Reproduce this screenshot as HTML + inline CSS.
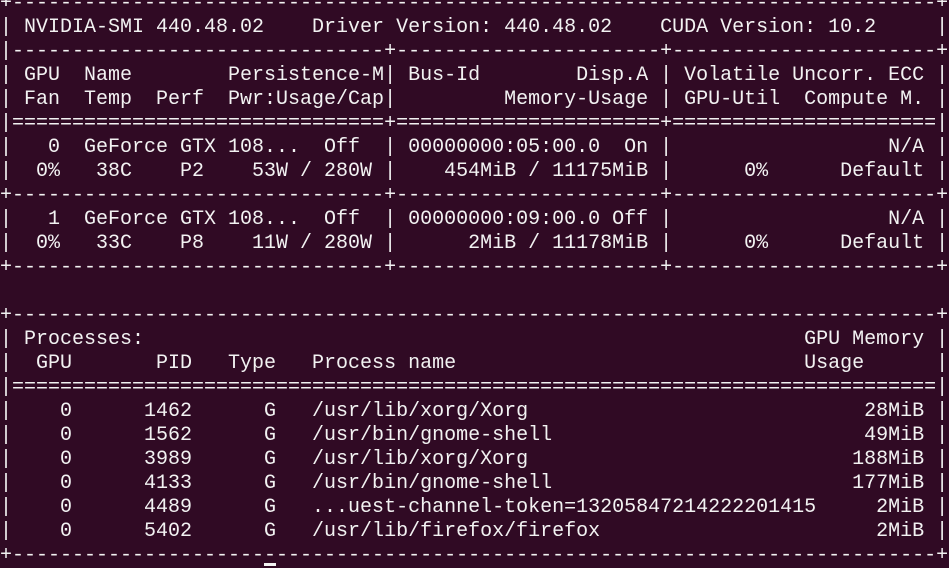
<!DOCTYPE html>
<html><head><meta charset="utf-8"><style>
html,body{margin:0;padding:0;background:#300a24;width:949px;height:566px;overflow:hidden;}
pre{position:absolute;left:0;top:-8px;margin:0;font-family:"Liberation Mono",monospace;font-size:20px;line-height:24px;color:#f2f2f2;white-space:pre;}
.cur{position:absolute;left:264px;top:563px;width:12px;height:3px;background:#f2f2f2;}
</style></head><body>
<pre>+-----------------------------------------------------------------------------+
| NVIDIA-SMI 440.48.02    Driver Version: 440.48.02    CUDA Version: 10.2     |
|-------------------------------+----------------------+----------------------+
| GPU  Name        Persistence-M| Bus-Id        Disp.A | Volatile Uncorr. ECC |
| Fan  Temp  Perf  Pwr:Usage/Cap|         Memory-Usage | GPU-Util  Compute M. |
|===============================+======================+======================|
|   0  GeForce GTX 108...  Off  | 00000000:05:00.0  On |                  N/A |
|  0%   38C    P2    53W / 280W |    454MiB / 11175MiB |      0%      Default |
+-------------------------------+----------------------+----------------------+
|   1  GeForce GTX 108...  Off  | 00000000:09:00.0 Off |                  N/A |
|  0%   33C    P8    11W / 280W |      2MiB / 11178MiB |      0%      Default |
+-------------------------------+----------------------+----------------------+

+-----------------------------------------------------------------------------+
| Processes:                                                       GPU Memory |
|  GPU       PID   Type   Process name                             Usage      |
|=============================================================================|
|    0      1462      G   /usr/lib/xorg/Xorg                            28MiB |
|    0      1562      G   /usr/bin/gnome-shell                          49MiB |
|    0      3989      G   /usr/lib/xorg/Xorg                           188MiB |
|    0      4133      G   /usr/bin/gnome-shell                         177MiB |
|    0      4489      G   ...uest-channel-token=13205847214222201415     2MiB |
|    0      5402      G   /usr/lib/firefox/firefox                       2MiB |
+-----------------------------------------------------------------------------+</pre>
<div class="cur"></div>
</body></html>
